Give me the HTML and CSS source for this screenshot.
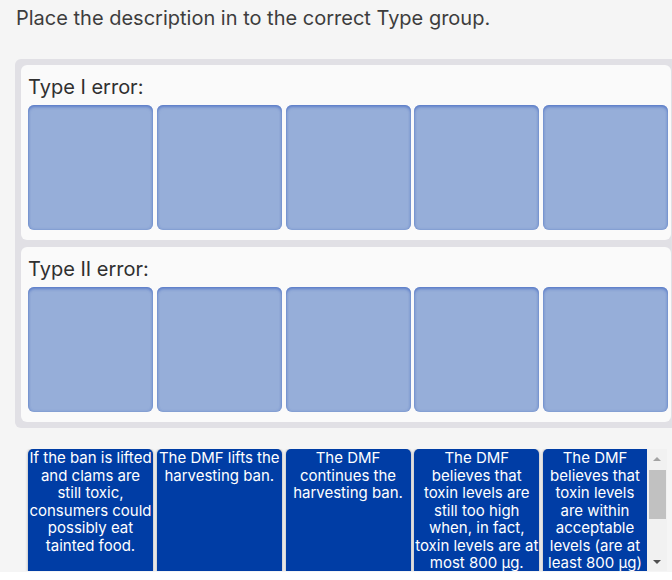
FILE: index.html
```html
<!DOCTYPE html>
<html lang="en">
<head>
  <meta charset="UTF-8" />
  <meta name="viewport" content="width=device-width, initial-scale=1.0"/>
  <title>Type I and Type II errors</title>
  <link rel="stylesheet" href="styles.css">
</head>
<body>
  <div class="page">
    <p class="prompt">Place the description in to the correct Type group.</p>

    <div class="groups">
      <div class="group">
        <div class="group-label">Type I error:</div>
        <div class="slots">
          <div class="slot"></div>
          <div class="slot"></div>
          <div class="slot"></div>
          <div class="slot"></div>
          <div class="slot"></div>
        </div>
      </div>
      <div class="group">
        <div class="group-label">Type II error:</div>
        <div class="slots">
          <div class="slot"></div>
          <div class="slot"></div>
          <div class="slot"></div>
          <div class="slot"></div>
          <div class="slot"></div>
        </div>
      </div>
    </div>

    <div class="tray">
      <div class="answers">
        <div class="card">If the ban is lifted and clams are still toxic, consumers could possibly eat tainted food.</div>
        <div class="card">The DMF lifts the harvesting ban.</div>
        <div class="card">The DMF continues the harvesting ban.</div>
        <div class="card">The DMF believes that toxin levels are still too high when, in fact, toxin levels are at most 800 μg.</div>
        <div class="card card-last">The DMF believes that toxin levels are within acceptable levels (are at least 800 μg) when, in fact, toxin levels are still too high.</div>
      </div>
      <div class="scrollbar">
        <div class="scroll-btn up"></div>
        <div class="scroll-track"><div class="scroll-thumb"></div></div>
        <div class="scroll-btn down"></div>
      </div>
    </div>
  </div>
</body>
</html>
```

FILE: styles.css
```css
html {
  background: #ffffff;
}
body {
  margin: 0;
  font-family: Inter, "Noto Sans", sans-serif;
}
.page {
  background: #f5f5f5;
  height: 572px;
  overflow: hidden;
}
.prompt {
  margin: 0;
  padding: 6px 0 0 16px;
  font-size: 20px;
  line-height: 24px;
  color: #3d3d3d;
}
.groups {
  margin: 29px 0 0 15px;
  padding: 6px 1px 6px 6px;
  background: #e1e0e5;
  border-radius: 6px 0 0 6px;
  display: flex;
  flex-direction: column;
  gap: 7px;
}
.group {
  background: #fafafa;
  border-radius: 6px;
  padding: 10px 7px 10px;
}
.group-label {
  font-size: 20px;
  line-height: 24px;
  color: #303030;
  margin-bottom: 6px;
}
.slots {
  display: grid;
  grid-template-columns: repeat(5, 125px);
  column-gap: 3.75px;
}
.slot {
  height: 125px;
  background: #96aed9;
  border-radius: 6px;
  box-shadow: inset 0 2px 3px rgba(50, 90, 190, 0.5), inset 0 0 3px rgba(60, 100, 190, 0.4);
}
.tray {
  margin: 21px 5px 0 21px;
  height: 122px;
  display: flex;
}
.answers {
  flex: 1;
  overflow: hidden;
  padding-left: 7px;
  display: grid;
  grid-template-columns: repeat(4, 125px) 1fr;
  column-gap: 3.75px;
  align-items: start;
}
.card {
  min-height: 209px;
  background: #003da5;
  color: #ffffff;
  border-radius: 5px 5px 0 0;
  box-shadow: 0 0 3px rgba(0, 0, 0, 0.35);
  font-size: 15px;
  line-height: 17.5px;
  text-align: center;
}
.card-last {
  border-top-right-radius: 0;
}
.scrollbar {
  width: 20px;
  background: #f1f1f1;
  display: flex;
  flex-direction: column;
}
.scroll-btn {
  height: 19px;
  display: flex;
  align-items: center;
  justify-content: center;
}
.scroll-btn::before {
  content: "";
  border-left: 4.5px solid transparent;
  border-right: 4.5px solid transparent;
}
.up::before {
  border-bottom: 4.5px solid #a3a3a3;
}
.down::before {
  border-top: 4.5px solid #505050;
}
.scroll-track {
  flex: 1;
  padding: 2px 1px 0 2px;
}
.scroll-thumb {
  height: 49px;
  background: #c1c1c1;
}
```
